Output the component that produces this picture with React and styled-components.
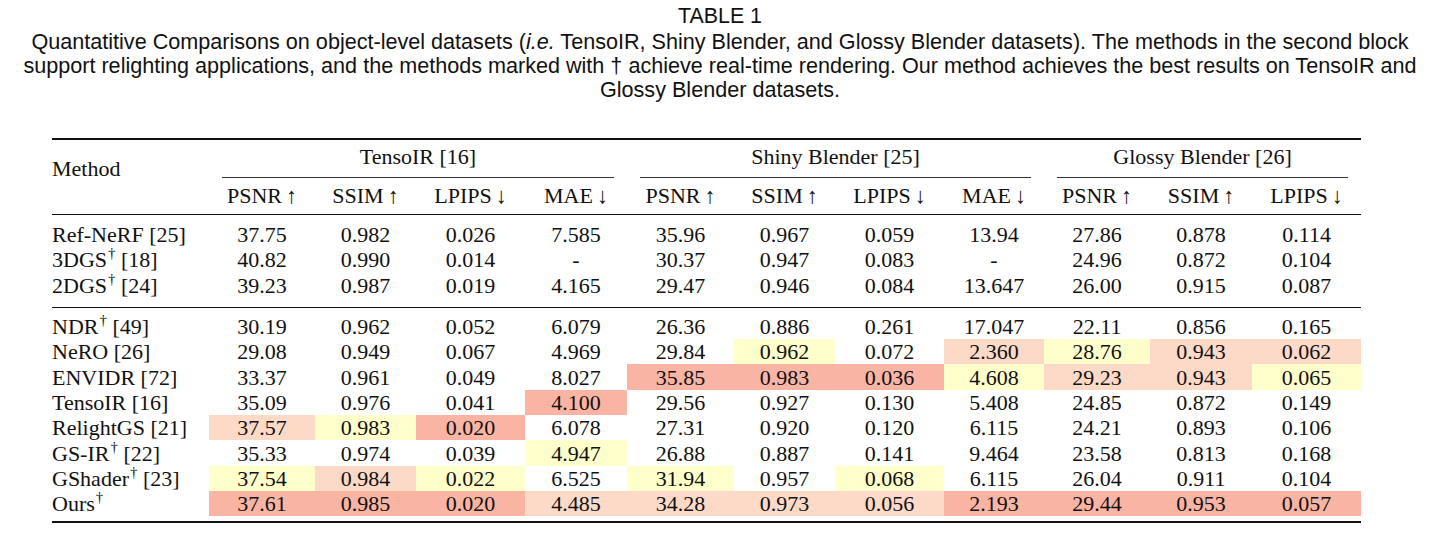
import React from 'react';
import styled, { createGlobalStyle } from 'styled-components';

const GlobalStyle = createGlobalStyle`
  html, body { margin: 0; padding: 0; background: #ffffff; }
  body { width: 1440px; height: 540px; overflow: hidden; }
`;

const RANK_COLORS = { 1: '#fab4a3', 2: '#fdd9c8', 3: '#ffffcb' };

const Page = styled.div`
  width: 1440px;
  padding-top: 4px;
  color: #111;
`;

const Title = styled.div`
  font-family: "Liberation Sans", Arial, sans-serif;
  font-size: 21.4px;
  line-height: 24px;
  text-align: center;
`;

const Caption = styled.p`
  margin: 2px 0 0;
  font-family: "Liberation Sans", Arial, sans-serif;
  font-size: 21.6px;
  line-height: 24px;
  text-align: center;
`;

const CaptionLine = styled.span`
  display: block;
  white-space: nowrap;
`;

const Table = styled.table`
  margin: 36px 0 0 52px;
  border-collapse: collapse;
  table-layout: fixed;
  width: 1309px;
  border-top: 2px solid #111;
  border-bottom: 2px solid #111;
  font-family: "Liberation Serif", "Times New Roman", serif;
  font-size: 22px;
  color: #111;
`;

const Head = styled.thead`
  border-bottom: 1px solid #111;
`;

const Body = styled.tbody`
  border-top: ${(p) => (p.$ruled ? '1px solid #111' : 'none')};
`;

const MethodHead = styled.th`
  padding: 18px 0 0;
  vertical-align: top;
  text-align: left;
  font-weight: normal;
  line-height: 22px;
`;

const GroupHead = styled.th`
  padding: 0;
  font-weight: normal;
`;

const GroupLabel = styled.div`
  margin: 0 13px;
  padding: 6px 0 9px;
  line-height: 22px;
  border-bottom: 1px solid #333;
  text-align: center;
  white-space: nowrap;
`;

const SubHead = styled.th`
  height: 36px;
  padding: 0;
  font-weight: normal;
  text-align: center;
  white-space: nowrap;
  line-height: 22px;
`;

const Arrow = styled.span`
  margin-left: 4px;
`;

const Spacer = styled.tr`
  td {
    height: ${(p) => p.$h}px;
    padding: 0;
  }
`;

const Row = styled.tr`
  height: 25.3px;
`;

const MethodCell = styled.td`
  padding: 0;
  text-align: left;
  white-space: nowrap;
  line-height: 25px;
`;

const Cell = styled.td`
  padding: 0;
  text-align: center;
  line-height: 25px;
  background: ${(p) => (p.$rank ? RANK_COLORS[p.$rank] : 'transparent')};
`;

const Dagger = styled.sup`
  font-size: 15px;
  line-height: 0;
  vertical-align: 9px;
  margin-left: 1px;
`;

const widths = [157, 106, 101, 109, 102, 107, 101, 109, 100, 106, 102, 109];

const groups = [
  { name: 'TensoIR [16]', metrics: [['PSNR', '↑'], ['SSIM', '↑'], ['LPIPS', '↓'], ['MAE', '↓']] },
  { name: 'Shiny Blender [25]', metrics: [['PSNR', '↑'], ['SSIM', '↑'], ['LPIPS', '↓'], ['MAE', '↓']] },
  { name: 'Glossy Blender [26]', metrics: [['PSNR', '↑'], ['SSIM', '↑'], ['LPIPS', '↓']] },
];

// value strings: "number" or "number|rank"
const block1 = [
  { name: 'Ref-NeRF', rt: false, ref: '[25]', v: '37.75 0.982 0.026 7.585 35.96 0.967 0.059 13.94 27.86 0.878 0.114' },
  { name: '3DGS', rt: true, ref: '[18]', v: '40.82 0.990 0.014 - 30.37 0.947 0.083 - 24.96 0.872 0.104' },
  { name: '2DGS', rt: true, ref: '[24]', v: '39.23 0.987 0.019 4.165 29.47 0.946 0.084 13.647 26.00 0.915 0.087' },
];

const block2 = [
  { name: 'NDR', rt: true, ref: '[49]', v: '30.19 0.962 0.052 6.079 26.36 0.886 0.261 17.047 22.11 0.856 0.165' },
  { name: 'NeRO', rt: false, ref: '[26]', v: '29.08 0.949 0.067 4.969 29.84 0.962|3 0.072 2.360|2 28.76|3 0.943|2 0.062|2' },
  { name: 'ENVIDR', rt: false, ref: '[72]', v: '33.37 0.961 0.049 8.027 35.85|1 0.983|1 0.036|1 4.608|3 29.23|2 0.943|2 0.065|3' },
  { name: 'TensoIR', rt: false, ref: '[16]', v: '35.09 0.976 0.041 4.100|1 29.56 0.927 0.130 5.408 24.85 0.872 0.149' },
  { name: 'RelightGS', rt: false, ref: '[21]', v: '37.57|2 0.983|3 0.020|1 6.078 27.31 0.920 0.120 6.115 24.21 0.893 0.106' },
  { name: 'GS-IR', rt: true, ref: '[22]', v: '35.33 0.974 0.039 4.947|3 26.88 0.887 0.141 9.464 23.58 0.813 0.168' },
  { name: 'GShader', rt: true, ref: '[23]', v: '37.54|3 0.984|2 0.022|3 6.525 31.94|3 0.957 0.068|3 6.115 26.04 0.911 0.104' },
  { name: 'Ours', rt: true, ref: '', v: '37.61|1 0.985|1 0.020|1 4.485|2 34.28|2 0.973|2 0.056|2 2.193|1 29.44|1 0.953|1 0.057|1' },
];

function DataRow({ row }) {
  const cells = row.v.split(' ').map((s) => {
    const [val, rank] = s.split('|');
    return { val, rank: rank ? Number(rank) : 0 };
  });
  return (
    <Row>
      <MethodCell>
        {row.name}
        {row.rt && <Dagger>†</Dagger>}
        {row.ref && ` ${row.ref}`}
      </MethodCell>
      {cells.map((c, i) => (
        <Cell key={i} $rank={c.rank}>{c.val}</Cell>
      ))}
    </Row>
  );
}

export default function App() {
  return (
    <Page>
      <GlobalStyle />
      <Title>TABLE 1</Title>
      <Caption>
        <CaptionLine>
          Quantatitive Comparisons on object-level datasets (<i>i.e.</i> TensoIR, Shiny Blender, and Glossy Blender datasets). The methods in the second block
        </CaptionLine>
        <CaptionLine>
          support relighting applications, and the methods marked with † achieve real-time rendering. Our method achieves the best results on TensoIR and
        </CaptionLine>
        <CaptionLine>Glossy Blender datasets.</CaptionLine>
      </Caption>
      <Table>
        <colgroup>
          {widths.map((w, i) => (
            <col key={i} style={{ width: w }} />
          ))}
        </colgroup>
        <Head>
          <tr>
            <MethodHead rowSpan={2}>Method</MethodHead>
            {groups.map((g) => (
              <GroupHead key={g.name} colSpan={g.metrics.length}>
                <GroupLabel>{g.name}</GroupLabel>
              </GroupHead>
            ))}
          </tr>
          <tr>
            {groups.flatMap((g) =>
              g.metrics.map(([m, a], i) => (
                <SubHead key={g.name + i}>
                  {m}
                  <Arrow>{a}</Arrow>
                </SubHead>
              ))
            )}
          </tr>
        </Head>
        <Body>
          <Spacer $h={7}><td colSpan={12} /></Spacer>
          {block1.map((r) => (
            <DataRow key={r.name} row={r} />
          ))}
          <Spacer $h={9}><td colSpan={12} /></Spacer>
        </Body>
        <Body $ruled>
          <Spacer $h={6}><td colSpan={12} /></Spacer>
          {block2.map((r) => (
            <DataRow key={r.name} row={r} />
          ))}
          <Spacer $h={5}><td colSpan={12} /></Spacer>
        </Body>
      </Table>
    </Page>
  );
}
